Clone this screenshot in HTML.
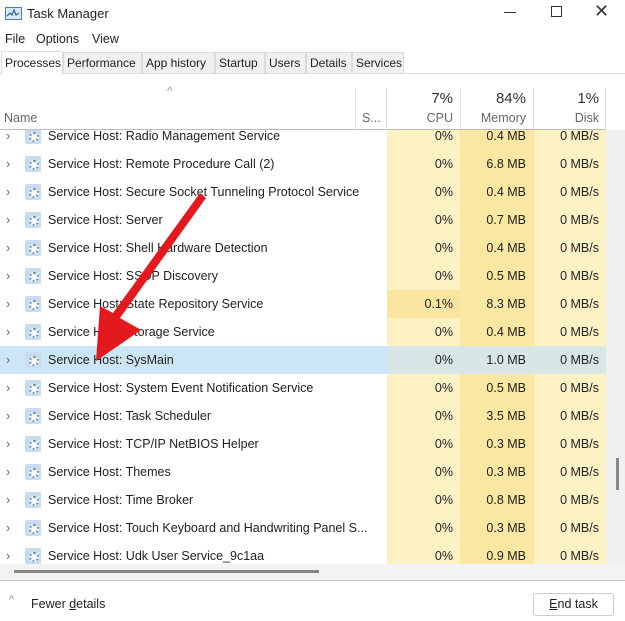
<!DOCTYPE html><html><head><style>
*{margin:0;padding:0;box-sizing:border-box}
body{width:625px;height:621px;background:#fff;font-family:"Liberation Sans",sans-serif;font-size:12.5px;color:#222;position:relative;overflow:hidden}
.a{position:absolute;white-space:nowrap}
.tab{position:absolute;top:52px;height:22px;line-height:21px;background:#f0f0f0;border:1px solid #dcdcdc;padding:0 3px;font-size:12px;white-space:nowrap;overflow:hidden}
.row{position:absolute;left:0;width:606px;height:28px;line-height:28px}
.row .c{position:absolute;text-align:right}
.gear{position:absolute;left:25px;top:6px;width:16px;height:16px;background:#c9dcee;border-radius:2px}
.gear:after{content:"";position:absolute;left:4px;top:4px;width:6px;height:6px;border:2px dotted #6d93bd;border-radius:50%;background:#fff}
</style></head><body>
<svg class="a" style="left:5px;top:7px" width="17" height="13"><rect x="0.5" y="0.5" width="16" height="12" fill="#dbe9f6" stroke="#4a7fb5"/><polyline points="2,9 5,6 7,8 9,3 11,8 14,6" fill="none" stroke="#2e6db0" stroke-width="1.3"/></svg>
<div class="a" style="left:27px;top:6px;font-size:13px">Task Manager</div>
<div class="a" style="left:504px;top:12px;width:12px;height:1.3px;background:#333"></div>
<div class="a" style="left:551px;top:6px;width:11px;height:11px;border:1.3px solid #333"></div>
<div class="a" style="left:594px;top:1px;font-size:18px;color:#333">✕</div>
<div class="a" style="left:5px;top:32px">File</div>
<div class="a" style="left:36px;top:32px">Options</div>
<div class="a" style="left:92px;top:32px">View</div>
<div class="a" style="left:0;top:73px;width:625px;height:1px;background:#dcdcdc"></div>
<div class="tab" style="left:63px;width:79px">Performance</div>
<div class="tab" style="left:142px;width:73px">App history</div>
<div class="tab" style="left:215px;width:50px">Startup</div>
<div class="tab" style="left:265px;width:41px">Users</div>
<div class="tab" style="left:306px;width:46px">Details</div>
<div class="tab" style="left:352px;width:52px">Services</div>
<div class="a" style="left:1px;top:51px;width:62px;height:24px;background:#fff;border:1px solid #dcdcdc;border-bottom:none;line-height:22px;padding-left:3px;font-size:12px">Processes</div>
<div class="a" style="left:167px;top:84px;color:#999;font-size:12px">^</div>
<div class="a" style="left:4px;top:111px;color:#666">Name</div>
<div class="a" style="left:355px;top:88px;width:1px;height:42px;background:#e2e2e2"></div>
<div class="a" style="left:386px;top:88px;width:1px;height:42px;background:#e2e2e2"></div>
<div class="a" style="left:460px;top:88px;width:1px;height:42px;background:#e2e2e2"></div>
<div class="a" style="left:533px;top:88px;width:1px;height:42px;background:#e2e2e2"></div>
<div class="a" style="left:605px;top:88px;width:1px;height:42px;background:#e2e2e2"></div>
<div class="a" style="left:362px;top:111px;color:#666">S...</div>
<div class="a" style="left:387px;top:90px;width:66px;text-align:right;font-size:15px;color:#333">7%</div>
<div class="a" style="left:387px;top:111px;width:66px;text-align:right;color:#666">CPU</div>
<div class="a" style="left:460px;top:90px;width:66px;text-align:right;font-size:15px;color:#333">84%</div>
<div class="a" style="left:460px;top:111px;width:66px;text-align:right;color:#666">Memory</div>
<div class="a" style="left:533px;top:90px;width:66px;text-align:right;font-size:15px;color:#333">1%</div>
<div class="a" style="left:533px;top:111px;width:66px;text-align:right;color:#666">Disk</div>
<div class="a" style="left:0;top:129px;width:606px;height:1px;background:#bbb"></div>
<div class="a" style="left:0;top:130px;width:625px;height:434px;overflow:hidden">
<div class="a" style="left:387px;top:0;width:73px;height:434px;background:#fdf2c4"></div>
<div class="a" style="left:460px;top:0;width:74px;height:434px;background:#f9e7a2"></div>
<div class="a" style="left:534px;top:0;width:72px;height:434px;background:#fdf2c4"></div>
<div class="a" style="left:606px;top:0;width:19px;height:434px;background:#f0f0f0"></div>
<div class="a" style="left:616px;top:328px;width:3px;height:32px;background:#888"></div>
<div class="a" style="left:387px;top:160px;width:73px;height:28px;background:#f9e5a0"></div>
<div class="a" style="left:0;top:216px;width:387px;height:28px;background:#cce6f7"></div>
<div class="a" style="left:387px;top:216px;width:219px;height:28px;background:#d8e6e6"></div>
<div id="rows"></div>
</div>
<div class="a" style="left:0;top:564px;width:625px;height:16px;background:#f3f3f3"></div>
<div class="a" style="left:14px;top:570px;width:305px;height:3px;background:#858585"></div>
<div class="a" style="left:0;top:580px;width:625px;height:1px;background:#ccc"></div>
<div class="a" style="left:9px;top:594px;color:#888;font-size:11px">^</div>
<div class="a" style="left:31px;top:597px">Fewer <u>d</u>etails</div>
<div class="a" style="left:533px;top:593px;width:81px;height:23px;border:1px solid #ccc;border-radius:3px;text-align:center;line-height:21px"><u>E</u>nd task</div>
<svg class="a" style="left:0;top:0" width="625" height="621"><path d="M200,193 L206,198 L120,318 L141,330 L96,361 L100,306 L113,313 Z" fill="#e3191d"/></svg>
<script>
var d=[["Radio Management Service","0%","0.4 MB"],["Remote Procedure Call (2)","0%","6.8 MB"],["Secure Socket Tunneling Protocol Service","0%","0.4 MB"],["Server","0%","0.7 MB"],["Shell Hardware Detection","0%","0.4 MB"],["SSDP Discovery","0%","0.5 MB"],["State Repository Service","0.1%","8.3 MB"],["Storage Service","0%","0.4 MB"],["SysMain","0%","1.0 MB"],["System Event Notification Service","0%","0.5 MB"],["Task Scheduler","0%","3.5 MB"],["TCP/IP NetBIOS Helper","0%","0.3 MB"],["Themes","0%","0.3 MB"],["Time Broker","0%","0.8 MB"],["Touch Keyboard and Handwriting Panel S...","0%","0.3 MB"],["Udk User Service_9c1aa","0%","0.9 MB"]];
var h="";d.forEach(function(r,i){var t=-8+28*i;h+='<div class="row" style="top:'+t+'px"><span class="a" style="left:6px;color:#666">&#8250;</span><span class="gear"></span><span class="a" style="left:48px">Service Host: '+r[0]+'</span><span class="c" style="left:387px;width:66px">'+r[1]+'</span><span class="c" style="left:460px;width:66px">'+r[2]+'</span><span class="c" style="left:534px;width:65px">0 MB/s</span></div>'});
document.getElementById("rows").innerHTML=h;
</script>
</body></html>
